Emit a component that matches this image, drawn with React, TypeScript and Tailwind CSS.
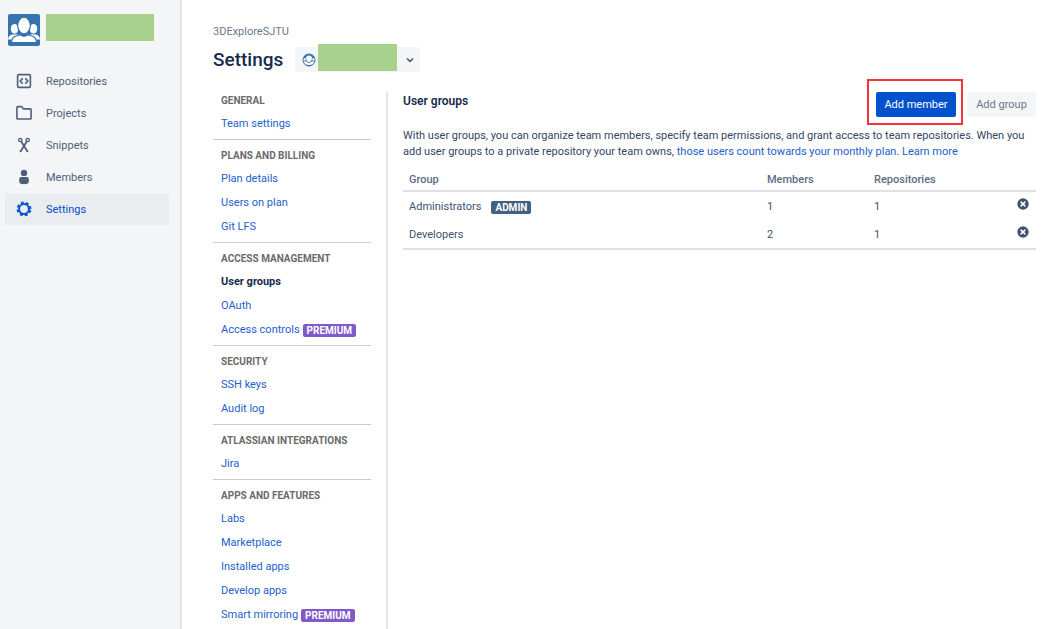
import React from "react";

type NavItem = { label: string; icon: React.ReactNode; active?: boolean };
type MenuLink = { label: string; premium?: boolean; active?: boolean };
type Section = { title: string; links: MenuLink[] };

const RepoIcon = () => (
  <svg viewBox="0 0 16 16" className="size-4" fill="none" stroke="currentColor" strokeWidth="1.6">
    <rect x="1.6" y="1.6" width="12.8" height="12.8" rx="1.2" />
    <path d="M6.7 5.4 4.2 8l2.5 2.6M9.3 5.4 11.8 8l-2.5 2.6" />
  </svg>
);

const FolderIcon = () => (
  <svg viewBox="0 0 16 16" className="size-4" fill="none" stroke="currentColor" strokeWidth="1.6" strokeLinejoin="round">
    <path d="M.9 13.2V2.4q0-.8.8-.8h4l1.6 2.3h7q.8 0 .8.8v8.5q0 .8-.8.8H1.7q-.8 0-.8-.8Z" />
  </svg>
);

const ScissorsIcon = () => (
  <svg viewBox="0 0 16 16" className="size-4" fill="none" stroke="currentColor" strokeWidth="1.4">
    <circle cx="4.3" cy="3" r="1.6" />
    <circle cx="11.7" cy="3" r="1.6" />
    <path d="M5.2 4.4 8 9l3.8 5.9M10.8 4.4 8 9l-3.8 5.9" strokeWidth="1.8" />
  </svg>
);

const PersonIcon = () => (
  <svg viewBox="0 0 16 16" className="size-4" fill="currentColor">
    <circle cx="8" cy="3.9" r="3.2" />
    <path d="M3.2 10q0-2 2-2h5.6q2 0 2 2v2.8q0 2.4-4.8 2.4t-4.8-2.4Z" />
  </svg>
);

const GearIcon = () => (
  <svg viewBox="0 0 16 16" className="size-4" fill="none" stroke="currentColor">
    <circle cx="8" cy="8" r="4.9" strokeWidth="2" />
    <circle cx="8" cy="8" r="6.5" strokeWidth="1.8" strokeDasharray="2.9 2.205" strokeDashoffset="-1.1" />
  </svg>
);

const TeamIcon = () => (
  <svg viewBox="0 0 32 32" className="size-8 shrink-0" role="img" aria-label="Team">
    <rect width="32" height="32" rx="2" fill="#3572b0" />
    <g fill="#fff">
      <ellipse cx="6.5" cy="14.8" rx="3.7" ry="4.9" />
      <ellipse cx="25.5" cy="14.8" rx="3.7" ry="4.9" />
      <path d="M0 25.500q.3-4 4-5h6v5ZM32 25.500q-.3-4-4-5h-6v5Z" />
    </g>
    <g fill="#fff" stroke="#3572b0" strokeWidth="1.2">
      <path d="M3.500 28.600q.2-5.600 4.800-6.600l4-1.300q3.700 3 7.400 0l4 1.300q4.600 1 4.800 6.600Z" />
      <ellipse cx="16" cy="11.5" rx="6.3" ry="8.3" />
    </g>
  </svg>
);

const SmallTeamIcon = () => (
  <svg viewBox="0 0 14 14" className="size-3.5 shrink-0" aria-hidden="true">
    <circle cx="7" cy="7" r="6" fill="#fff" stroke="#3572b0" strokeWidth="1" />
    <path d="M1.200 5.500Q2.200 1 7 1t5.800 4.500q-1.600-1-2.700.2Q9.800 2.600 7 2.600T3.900 5.700Q2.800 4.500 1.200 5.500Z" fill="#3572b0" />
    <path d="M3.800 5.800q.2 2.300 1.600 3.300L7 9.800l1.600-.7q1.400-1 1.600-3.300M1.200 8.600l2.600-.8 1 1M12.800 8.600l-2.600-.8-1 1" fill="none" stroke="#3572b0" strokeWidth=".9" />
    <path d="M3 11.300q4 1.300 8 0-1.600 1.900-4 1.900t-4-1.900Z" fill="#3572b0" />
  </svg>
);

const RemoveIcon = () => (
  <svg viewBox="0 0 12 12" className="size-3">
    <circle cx="6" cy="6" r="5.7" fill="#42526e" />
    <path d="m4.100 4.100 3.800 3.800M7.900 4.100 4.100 7.900" stroke="#fff" strokeWidth="1.5" strokeLinecap="round" />
  </svg>
);

const nav: NavItem[] = [
  { label: "Repositories", icon: <RepoIcon /> },
  { label: "Projects", icon: <FolderIcon /> },
  { label: "Snippets", icon: <ScissorsIcon /> },
  { label: "Members", icon: <PersonIcon /> },
  { label: "Settings", icon: <GearIcon />, active: true },
];

const sections: Section[] = [
  { title: "GENERAL", links: [{ label: "Team settings" }] },
  {
    title: "PLANS AND BILLING",
    links: [{ label: "Plan details" }, { label: "Users on plan" }, { label: "Git LFS" }],
  },
  {
    title: "ACCESS MANAGEMENT",
    links: [
      { label: "User groups", active: true },
      { label: "OAuth" },
      { label: "Access controls", premium: true },
    ],
  },
  { title: "SECURITY", links: [{ label: "SSH keys" }, { label: "Audit log" }] },
  { title: "ATLASSIAN INTEGRATIONS", links: [{ label: "Jira" }] },
  {
    title: "APPS AND FEATURES",
    links: [
      { label: "Labs" },
      { label: "Marketplace" },
      { label: "Installed apps" },
      { label: "Develop apps" },
      { label: "Smart mirroring", premium: true },
    ],
  },
];

const groups = [
  { name: "Administrators", admin: true, members: 1, repositories: 1 },
  { name: "Developers", admin: false, members: 2, repositories: 1 },
];

function Sidebar() {
  return (
    <aside className="w-[182px] shrink-0 border-r-2 border-[#e1e3e6] bg-[#f4f5f7]">
      <div className="flex gap-1.5 pt-3.5 pl-2">
        <TeamIcon />
        <div className="h-[27px] w-[108px] bg-[#a9d18e]" />
      </div>
      <nav aria-label="Team" className="mt-[19px] pr-[11px] pl-[5px]">
        {nav.map((item) => (
          <a
            key={item.label}
            href="#"
            aria-current={item.active ? "page" : undefined}
            className={
              item.active
                ? "flex h-8 items-center gap-3.5 rounded-xs bg-[#ebecf0] pl-[11px] text-[#0052cc]"
                : "flex h-8 items-center gap-3.5 rounded-xs pl-[11px] text-[#505f79]"
            }
          >
            {item.icon}
            <span className="pt-0.5">{item.label}</span>
          </a>
        ))}
      </nav>
    </aside>
  );
}

function SettingsMenu() {
  return (
    <nav aria-label="Settings" className="w-[158px] shrink-0 pt-px">
      {sections.map((section) => (
        <section
          key={section.title}
          className="border-b border-[#c9cacc] pt-2 pb-[3px] first:pt-0 last:border-b-0"
        >
          <h3 className="pl-2 text-[10px] leading-4 font-bold text-[#6b6b6b]">{section.title}</h3>
          <ul className="mt-[3px]">
            {section.links.map((link) => (
              <li key={link.label} className="flex h-6 items-center gap-[3px] pl-2 whitespace-nowrap">
                <a
                  href="#"
                  aria-current={link.active ? "page" : undefined}
                  className={link.active ? "font-bold text-[#172b4d]" : "text-[#2361cc]"}
                >
                  {link.label}
                </a>
                {link.premium && (
                  <span className="rounded-xs bg-[#8259c9] px-1 text-[10px] leading-[13px] font-bold text-white">
                    PREMIUM
                  </span>
                )}
              </li>
            ))}
          </ul>
        </section>
      ))}
    </nav>
  );
}

function UserGroups() {
  return (
    <section className="min-w-0 flex-1 border-l-2 border-[#e4e5e8] pr-[5px] pl-[15px]">
      <div className="flex items-start justify-between">
        <h2 className="pt-px text-xs leading-4 font-semibold text-[#172b4d]">User groups</h2>
        <div className="flex gap-[11px]">
          <div className="relative">
            <button type="button" className="h-[25px] w-20 rounded-xs bg-[#0052cc] pt-px whitespace-nowrap text-white">
              Add member
            </button>
            <span className="pointer-events-none absolute -right-[7px] -left-[9px] -top-[13px] -bottom-2 border-2 border-[#f5333a]" />
          </div>
          <button type="button" className="h-[25px] w-[69px] rounded-xs bg-[#f4f5f7] pt-px whitespace-nowrap text-[#6b778c]">
            Add group
          </button>
        </div>
      </div>
      <p className="mt-[11px] text-[#344563]">
        With user groups, you can organize team members, specify team permissions, and grant access to team
        repositories. When you add user groups to a private repository your team owns,{" "}
        <a href="#" className="text-[#2361cc]">those users count towards your monthly plan</a>.{" "}
        <a href="#" className="text-[#2361cc]">Learn more</a>
      </p>
      <table className="mt-2 w-full table-fixed border-b-2 border-[#dfe1e6] text-left text-[#42526e]">
        <thead className="border-b-2 border-[#dfe1e6] text-[#5e6c84]">
          <tr className="h-[23px]">
            <th className="pt-px pl-1.5 font-medium">Group</th>
            <th className="w-[107px] pt-px font-medium">Members</th>
            <th className="w-[107px] pt-px font-medium">Repositories</th>
            <td className="w-[55px]" />
          </tr>
        </thead>
        <tbody>
          {groups.map((group) => (
            <tr key={group.name} className="h-[29px]">
              <td className="pt-0.5 pl-1.5">
                <div className="flex items-center gap-2.5">
                  {group.name}
                  {group.admin && (
                    <span className="rounded-xs bg-[#42607f] px-1 text-[10px] leading-[13px] font-bold text-white">
                      ADMIN
                    </span>
                  )}
                </div>
              </td>
              <td className="pt-0.5">{group.members}</td>
              <td className="pt-0.5">{group.repositories}</td>
              <td className="pr-[7px] pb-1">
                <button type="button" aria-label={`Remove ${group.name}`} className="ml-auto block">
                  <RemoveIcon />
                </button>
              </td>
            </tr>
          ))}
        </tbody>
      </table>
    </section>
  );
}

export default function App() {
  return (
    <div className="flex h-screen overflow-hidden bg-white font-['Roboto',sans-serif] text-[11px] leading-4">
      <Sidebar />
      <main className="min-w-0 flex-1 pt-6 pl-[31px]">
        <a href="#" className="block w-fit text-[#6b778c]">3DExploreSJTU</a>
        <header className="mt-1 flex items-start gap-3">
          <h1 className="text-[19px] leading-8 font-medium text-[#172b4d]">Settings</h1>
          <button
            type="button"
            aria-label="Switch team"
            className="mt-[3px] flex h-[25px] items-center rounded-xs bg-[#f4f5f7] pr-1.5 pl-[7px]"
          >
            <SmallTeamIcon />
            <span className="ml-0.5 -mt-1 h-[27px] w-[79px] bg-[#a9d18e]" />
            <svg viewBox="0 0 8 8" className="ml-[9px] size-2" fill="none" stroke="#42526e" strokeWidth="1.5">
              <path d="m1 2.500 3 3 3-3" />
            </svg>
          </button>
        </header>
        <div className="mt-4 flex min-h-screen gap-[15px]">
          <SettingsMenu />
          <UserGroups />
        </div>
      </main>
    </div>
  );
}
